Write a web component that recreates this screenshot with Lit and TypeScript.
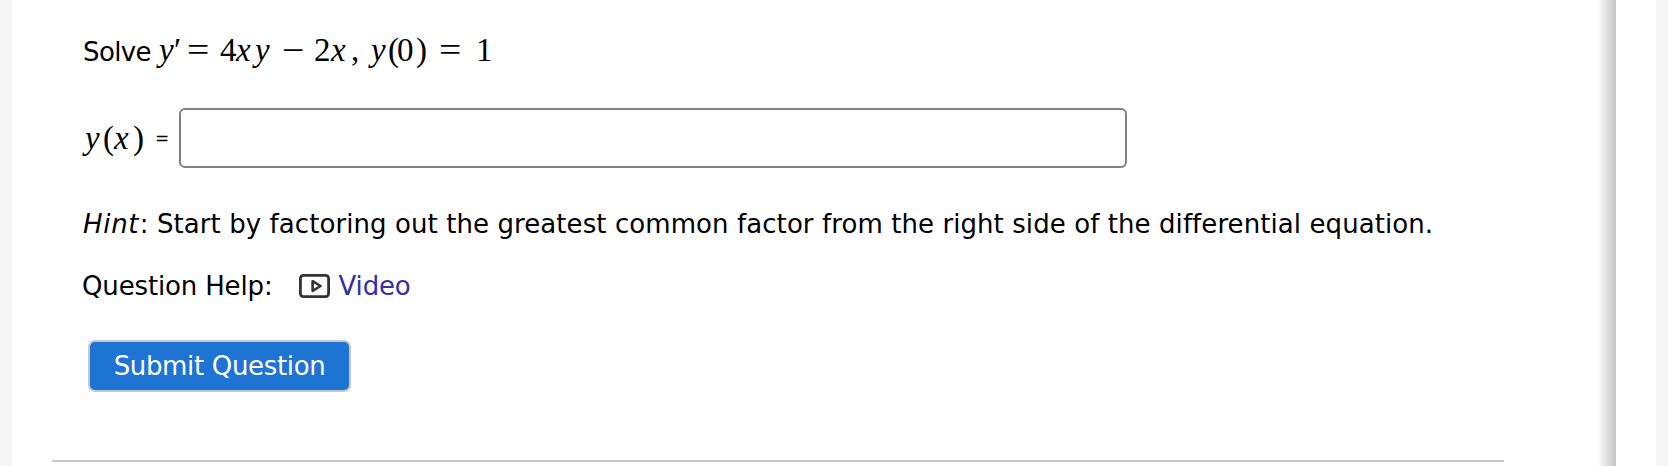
import { LitElement, html, css } from "lit";
import { customElement } from "lit/decorators.js";

type Tok = [text: string, pitch: number, kind?: "i" | "w"];

const LINE1: Tok[] = [
  ["y", 15, "i"], ["′", 13], ["=", 33, "w"], ["4", 16], ["x", 19, "i"], ["y", 27, "i"],
  ["−", 32, "w"], ["2", 17], ["x", 20, "i"], [",", 20], ["y", 17, "i"], ["(", 9], ["0", 19],
  [")", 23], ["=", 37, "w"], ["1", 15],
];
const LINE2: Tok[] = [["y", 18, "i"], ["(", 11], ["x", 19, "i"], [")", 12]];

@customElement("app-root")
export class AppRoot extends LitElement {
  static styles = css`
    :host { display: block; width: 1668px; height: 466px; overflow: hidden; background: #f7f7f7; font-family: "DejaVu Sans", sans-serif; color: #000; }
    .frame { display: flex; height: 466px; }
    .gutter { width: 12px; flex: none; }
    .page { width: 1644px; flex: none; background: #fff; position: relative; display: flex; }
    .content { width: 1452px; margin-left: 40px; height: 466px; display: flex; flex-direction: column; padding-top: 30px; box-sizing: border-box; }
    .shade { position: absolute; top: 0; bottom: 0; left: 1585px; width: 19px; background: linear-gradient(to right, #ffffff, #c6c6c6); }
    .q { display: flex; align-items: baseline; font-size: 26px; line-height: 40px; padding-left: 31px; height: 40px; white-space: nowrap; }
    .solve { letter-spacing: -0.6px; margin-right: 8px; }
    .m { display: inline-flex; align-items: baseline; font-family: "Liberation Serif", serif; font-size: 33px; line-height: 40px; }
    .t { display: inline-block; }
    .i { font-style: italic; }
    .w { transform: scaleX(1.2); transform-origin: left center; }
    .row { display: flex; align-items: center; margin-top: 38px; padding-left: 33px; height: 60px; }
    .eq { font-size: 17px; margin: 0 10px; }
    .box { width: 948px; height: 60px; box-sizing: border-box; border: 2px solid #808080; border-radius: 6px; background: #fff; }
    .hint { font-size: 26px; line-height: 40px; margin-top: 36px; padding-left: 31px; white-space: nowrap; letter-spacing: 0.08px; }
    .hint .i { letter-spacing: 0.7px; margin-right: 0.5px; }
    .help { display: flex; align-items: center; height: 40px; margin-top: 22px; padding-left: 30px; font-size: 26px; letter-spacing: -0.15px; white-space: nowrap; }
    .help svg { margin-left: 26px; margin-right: 9px; flex: none; }
    .help a { color: #3030a8; text-decoration: none; }
    .btn { margin: 34px 0 0 36px; width: 263px; height: 52px; box-sizing: border-box; border: 2px solid #c8c8c8; border-radius: 7px; background: #1d74d2; color: #fff; font: 26px "DejaVu Sans", sans-serif; letter-spacing: -0.34px; display: flex; align-items: center; justify-content: center; padding: 0; }
    .rule { margin-top: auto; margin-bottom: 4px; height: 2px; background: #c8c8c8; flex: none; }
  `;

  private math(tokens: Tok[]) {
    return html`<span class="m">${tokens.map(
      ([text, pitch, kind]) => html`<span class="t ${kind ?? ""}" style="width:${pitch}px">${text}</span>`
    )}</span>`;
  }

  render() {
    return html`<div class="frame">
      <div class="gutter"></div>
      <div class="page">
        <div class="content">
          <div class="q"><span class="solve">Solve</span>${this.math(LINE1)}</div>
          <div class="row">${this.math(LINE2)}<span class="eq">=</span><div class="box"></div></div>
          <div class="hint"><span class="i">Hint</span>: Start by factoring out the greatest common factor from the right side of the differential equation.</div>
          <div class="help">Question Help:
            <svg width="31" height="24" viewBox="0 0 31 24" fill="none"><rect x="1.4" y="1.4" width="28.2" height="21.2" rx="3" stroke="#333" stroke-width="2.8"/><path d="M13.6 7.2l8 4.8-8 4.8z" stroke="#333" stroke-width="2.6" stroke-linejoin="round"/></svg>
            <a>Video</a></div>
          <button class="btn">Submit Question</button>
          <div class="rule"></div>
        </div>
        <div class="shade"></div>
      </div>
    </div>`;
  }
}
